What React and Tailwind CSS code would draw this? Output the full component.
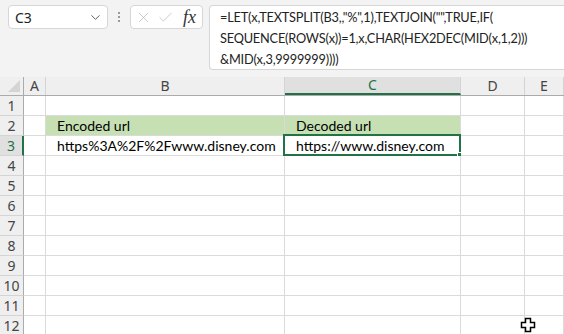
import { ChevronDown, X, Check } from 'lucide-react'

const cols = [
  { key: 'A', w: 'w-[22px]' },
  { key: 'B', w: 'w-[239px]' },
  { key: 'C', w: 'w-[176px]' },
  { key: 'D', w: 'w-[64px]' },
  { key: 'E', w: 'flex-1' },
]

const cells = {
  B2: 'Encoded url',
  C2: 'Decoded url',
  B3: 'https%3A%2F%2Fwww.disney.com',
  C3: 'https://www.disney.com',
}

const ui = { fontFamily: '"Noto Sans", "Open Sans", sans-serif' }
const lato = { fontFamily: 'Lato, "Noto Sans", sans-serif' }

function FormulaBar() {
  return (
    <div className="flex h-[77px] items-start bg-[#f3f3f3] pl-2 pt-[5px]" style={ui}>
      <div className="flex h-6 w-[100px] items-center justify-between rounded-[4px] border border-[#d6d6d6] bg-white pl-[6px] pr-[4px] text-[14px] text-[#222]">
        <span>C3</span>
        <ChevronDown size={15} strokeWidth={1.5} className="text-[#555]" />
      </div>
      <div className="flex h-6 w-[22px] flex-col items-center justify-center gap-[2px]">
        <span className="h-[2px] w-[2px] bg-[#9a9a9a]" />
        <span className="h-[2px] w-[2px] bg-[#9a9a9a]" />
        <span className="h-[2px] w-[2px] bg-[#9a9a9a]" />
      </div>
      <div className="flex h-6 w-[73px] items-center rounded-[4px] border border-[#d6d6d6] bg-white pl-[4px]">
        <X size={17} strokeWidth={1} className="text-[#b5b5b5]" />
        <Check size={17} strokeWidth={1} className="ml-[5px] text-[#b5b5b5]" />
        <span
          className="ml-[9px] text-[18px] italic leading-none text-[#333]"
          style={{ fontFamily: '"Liberation Serif", "DejaVu Serif", serif' }}
        >
          fx
        </span>
      </div>
      <div
        className="ml-[6px] h-[65px] flex-1 rounded-l-[4px] border border-r-0 border-[#d6d6d6] bg-white pl-[10px] pt-[1px] text-[12.75px] leading-[21px] tracking-[-0.2px] text-[#222]"
        style={lato}
      >
        <div>=LET(x,TEXTSPLIT(B3,,"%",1),TEXTJOIN("",TRUE,IF(</div>
        <div>SEQUENCE(ROWS(x))=1,x,CHAR(HEX2DEC(MID(x,1,2)))</div>
        <div>&amp;MID(x,3,9999999))))</div>
      </div>
    </div>
  )
}

function HeaderRow() {
  return (
    <div className="flex h-[19px] border-b border-[#ababab] bg-[#efefef] text-[14px] text-[#444]" style={ui}>
      <div className="relative w-6 shrink-0 border-r border-[#ababab]">
        <div className="absolute bottom-[3px] right-[3px] h-0 w-0 border-b-[12px] border-l-[12px] border-b-[#d4d4d4] border-l-transparent" />
      </div>
      {cols.map((c) => (
        <div
          key={c.key}
          className={`${c.w} ${c.key === 'C' ? 'border-b-2 border-b-[#217346] bg-[#e0e0e0] text-[#217346]' : ''} flex shrink-0 items-center justify-center border-r border-[#d4d4d4] leading-none`}
        >
          {c.key}
        </div>
      ))}
    </div>
  )
}

function Row({ n }) {
  const active = n === 3
  return (
    <div className="flex h-5">
      <div
        className={`flex w-6 shrink-0 items-center justify-center border-b border-[#d4d4d4] text-[14px] leading-none ${
          active ? 'border-r-2 border-r-[#217346] bg-[#e0e0e0] text-[#217346]' : 'border-r border-r-[#ababab] bg-[#efefef] text-[#444]'
        }`}
        style={ui}
      >
        {n}
      </div>
      {cols.map((c) => {
        const id = c.key + n
        const green = n === 2 && (c.key === 'B' || c.key === 'C')
        return (
          <div
            key={id}
            className={`${c.w} relative flex shrink-0 items-center border-b border-r border-[#dadada] pl-[11px] text-[14px] text-black ${
              green ? 'bg-[#c6e0b4]' : 'bg-white'
            }`}
            style={lato}
          >
            {cells[id]}
            {id === 'C3' && (
              <>
                <div className="absolute -left-[2px] -top-[2px] h-[22px] w-[178px] border-2 border-[#217346]" />
                <div className="absolute -bottom-[3px] -right-[3px] h-[6px] w-[6px] border border-white bg-[#217346]" />
              </>
            )}
          </div>
        )
      })}
    </div>
  )
}

export default function App() {
  return (
    <div className="relative h-[334px] w-[564px] overflow-hidden bg-white">
      <FormulaBar />
      <HeaderRow />
      {Array.from({ length: 12 }, (_, i) => (
        <Row key={i} n={i + 1} />
      ))}
      <svg className="absolute left-[520px] top-[317px]" width="16" height="16" viewBox="0 0 16 16">
        <path d="M5.5 1.5h5v4h4v5h-4v4h-5v-4h-4v-5h4z" fill="white" stroke="black" strokeWidth="1.5" />
      </svg>
    </div>
  )
}
